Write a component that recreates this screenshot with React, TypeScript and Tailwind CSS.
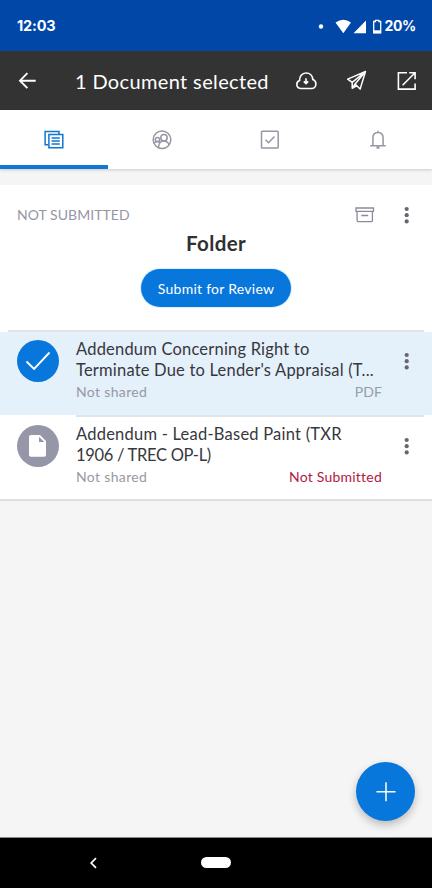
import type { ReactNode } from "react";
import clsx from "clsx";

type Doc = {
  id: number;
  lines: [string, string];
  tracking: [string, string];
  status: string;
  statusClass: string;
  selected: boolean;
};

const DOCS: Doc[] = [
  {
    id: 1,
    lines: ["Addendum Concerning Right to", "Terminate Due to Lender's Appraisal (T..."],
    tracking: ["tracking-[0.2px]", "tracking-[0.2px]"],
    status: "PDF",
    statusClass: "text-[#959dac] tracking-[0.1px]",
    selected: true,
  },
  {
    id: 2,
    lines: ["Addendum - Lead-Based Paint (TXR", "1906 / TREC OP-L)"],
    tracking: ["tracking-[0.23px]", "tracking-[-0.3px]"],
    status: "Not Submitted",
    statusClass: "text-[#b3193f] tracking-[0.22px]",
    selected: false,
  },
];

function Icon({ children, className, width = 1.5 }: { children: ReactNode; className?: string; width?: number }) {
  return (
    <svg
      width="24"
      height="24"
      viewBox="0 0 24 24"
      fill="none"
      stroke="currentColor"
      strokeWidth={width}
      className={clsx("shrink-0", className)}
    >
      {children}
    </svg>
  );
}

function MoreDots() {
  return (
    <svg width="24" height="24" viewBox="0 0 24 24" className="shrink-0 fill-[#666670]">
      <circle cx="11.7" cy="6" r="2.1" />
      <circle cx="11.7" cy="12.2" r="2.1" />
      <circle cx="11.7" cy="18.4" r="2.1" />
    </svg>
  );
}

function StatusBar() {
  return (
    <div className="flex h-[51px] items-center justify-between bg-[#0047a8] pr-[17px] pl-[17px] font-['Inter',sans-serif] text-[15px] font-bold text-white">
      <span className="text-[14.5px] tracking-[-0.2px]">12:03</span>
      <div className="flex items-center">
        <svg width="66" height="18" viewBox="0 0 66 18" fill="#fff">
          <circle cx="5" cy="9.5" r="2.2" />
          <path d="M19.5 5.5Q27.3 0.2 35 5.5L27.3 16.2Z" />
          <path d="M50 3.5V16.2H37.5Z" />
          <path d="M57.7 4.500V15.800H64.700V4.500H62.900V3.300H59.500V4.500Z" fill="none" stroke="#fff" strokeWidth="1.3" />
          <path d="M57.500 13.300H65V16.200H57.500Z" />
        </svg>
        <span className="-mr-px ml-[3px] text-[14px] tracking-[-0.35px]">20%</span>
      </div>
    </div>
  );
}

function Toolbar() {
  return (
    <div className="flex h-[59px] items-center bg-[#333] pr-[13px] pl-[16px] text-white">
      <Icon width={1.9}>
        <path d="M19.7 11.7H4.2M11.4 4.2 4 11.7l7.4 7.5" />
      </Icon>
      <h1 className="ml-[35px] flex-1 text-[20px] whitespace-nowrap tracking-[0.36px]">1 Document selected</h1>
      <div className="flex items-center gap-[26px]">
        <Icon width={1.6}>
          <path d="M6 19.500C3.500 19.500 1.800 17.700 1.800 15.400c0-1.900 1.100-3.300 2.800-3.900C4.300 7.600 7 4 11 4s6.600 2.900 6.800 6.600c1.900.600 3.100 2.300 3.100 4.500 0 2.500-1.800 4.400-4.200 4.400Z" />
          <path d="M11 9.200v5.300M8.800 12.400l2.200 2.200 2.200-2.200" />
        </Icon>
        <Icon width={1.5}>
          <path
            d="M20.500 2.500 2.700 10.100l4.500 3.200L20.500 2.500 10.100 14.900l5 5.200ZM7.200 13.300V19.300L10.100 14.900M7.200 19.300l4.700-2.600"
            strokeLinejoin="round"
          />
        </Icon>
        <Icon width={1.6}>
          <path d="M12 3.700H3.400V20.100H20.100V14.600M14.200 3.700H20.100V10.300M19.800 4 7.600 16.200" />
        </Icon>
      </div>
    </div>
  );
}

function Tabs() {
  const tab = "flex h-[59px] items-center justify-center";
  return (
    <nav className="relative z-10 grid h-[59px] grid-cols-4 bg-white text-[#9696a5] shadow-[0_1px_3px_rgba(0,0,0,0.18)]">
      <div className={clsx(tab, "border-b-4 border-[#1177d1] pt-[4px] text-[#1177d1]")}>
        <Icon>
          <path d="M6.200 16.700H3.100V3.600H17V6.300" />
          <path d="M6.900 6.500H20.800V19.800H6.900Z" />
          <path d="M9.600 10.100H17.800M9.600 13.100H17.800M9.600 16.100H17.800" />
        </Icon>
      </div>
      <div className={tab}>
        <Icon>
          <circle cx="12" cy="11.8" r="8.8" />
          <circle cx="14" cy="9.7" r="3.2" />
          <circle cx="7.5" cy="11.6" r="2.2" />
          <path d="M8.500 19.800c.2-4.200 2.200-6.700 5.200-6.700 2.700 0 4.700 1.400 5.600 4.200M3.900 15.700c.8-1.600 2-2.200 3.500-2.200 1 0 1.800.3 2.500 1" />
        </Icon>
      </div>
      <div className={tab}>
        <Icon>
          <rect x="3.5" y="3.3" width="16.7" height="16.7" rx="0.8" />
          <path d="m7.500 11.700 3 3 6-6.300" />
        </Icon>
      </div>
      <div className={tab}>
        <Icon>
          <path d="M4.200 17.700h15.600M6.900 17.500V10C6.900 6.600 9 4.500 12 4.500s5.100 2.100 5.100 5.500v7.500M12 2.700v1.800" />
          <path d="M11.300 18.300v1.700h1.400v-1.700" />
        </Icon>
      </div>
    </nav>
  );
}

function FolderHeader() {
  return (
    <section className="mt-4 flex h-[147px] flex-col bg-white px-2">
      <div className="flex h-[46px] items-start pt-[18px] pr-[5px] pl-[9px]">
        <span className="flex-1 text-[14px] leading-6 tracking-[0.05px] text-[#9696a5]">NOT SUBMITTED</span>
        <Icon className="mr-[18px] text-[#8b8b9b]" width={1.3}>
          <path d="M3 5H20.500V8.300H3ZM4.100 8.300V17.400Q4.100 18.600 5.300 18.600H18.200Q19.400 18.600 19.400 17.400V8.300M8.300 12.500H15.200" />
        </Icon>
        <MoreDots />
      </div>
      <h2 className="text-center text-[20.5px] leading-6 font-bold tracking-[0.4px] text-[#303033]">Folder</h2>
      <button className="mx-auto mt-[14px] h-[38px] w-[150px] rounded-full bg-[#0877dc] text-[14px] tracking-[0.26px] whitespace-nowrap text-white shadow-[0_0_1px_1px_#dceefb]">
        Submit for Review
      </button>
      <div className="mt-auto h-[2px] bg-[#dfe4e9]" />
    </section>
  );
}

function DocRow({ doc }: { doc: Doc }) {
  return (
    <li className={clsx("flex pr-[13px] pl-[17px]", doc.selected ? "h-[83px] bg-[#e4f0fa]" : "h-[82px] bg-white")}>
      <div
        className={clsx(
          "mt-[8px] flex size-[42px] shrink-0 items-center justify-center rounded-full",
          doc.selected ? "bg-[#0877dc]" : "bg-[#9696a9]",
        )}
      >
        {doc.selected ? (
          <svg width="26" height="22" viewBox="0 0 26 22" fill="none" stroke="#fff" strokeWidth="1.9">
            <path d="m1.500 11.500 7.600 7.500L24.500 2.500" />
          </svg>
        ) : (
          <svg width="18" height="22" viewBox="0 0 18 22" className="fill-white">
            <path
              fillRule="evenodd"
              d="M1.800 0H11L17 6V20a1.800 1.800 0 0 1-1.800 1.800H1.800a1.800 1.800 0 0 1-1.800-1.800V1.800A1.800 1.800 0 0 1 1.800 0ZM10 1.800V7H15.300Z"
            />
          </svg>
        )}
      </div>
      <div className="ml-[17px] flex w-[306px] flex-col pt-[7px]">
        <p className="text-[16.5px] leading-[21px] whitespace-nowrap text-[#37383d]">
          <span className={clsx("block", doc.tracking[0])}>{doc.lines[0]}</span>
          <span className={clsx("block", doc.tracking[1])}>{doc.lines[1]}</span>
        </p>
        <div className="flex justify-between text-[14px] leading-[22px]">
          <span className="tracking-[0.35px] text-[#9898a6]">Not shared</span>
          <span className={doc.statusClass}>{doc.status}</span>
        </div>
      </div>
      <div className="mt-[17px] ml-auto">
        <MoreDots />
      </div>
    </li>
  );
}

export default function App() {
  return (
    <div className="relative flex h-[888px] w-[432px] flex-col overflow-hidden bg-[#f5f5f5] font-['Lato',sans-serif]">
      <StatusBar />
      <Toolbar />
      <Tabs />
      <FolderHeader />
      <ul className="border-b-2 border-[#dfdfe1] bg-white">
        <DocRow doc={DOCS[0]} />
        <li className="mr-2 ml-[76px] h-[2px] bg-[#e1e5e9]" />
        <DocRow doc={DOCS[1]} />
      </ul>

      {/* Floating add button */}
      <button className="absolute right-[17px] bottom-[67px] flex size-[59px] items-center justify-center rounded-full bg-[#0877dc] shadow-[0_4px_8px_rgba(0,0,0,0.24)]">
        <svg width="20" height="20" viewBox="0 0 20 20" stroke="#fff" strokeWidth="1.5">
          <path d="M10 .3V19.3M.5 9.7H19.5" />
        </svg>
      </button>

      {/* System navigation */}
      <footer className="mt-auto grid h-[51px] grid-cols-[1fr_30px_1fr] items-center border-t border-[#8a8a8a] bg-black pb-px">
        <svg width="8" height="12" viewBox="0 0 8 12" fill="none" stroke="#fff" strokeWidth="1.7" className="ml-[90px]">
          <path d="M6 1.200 1.200 6l4.800 4.800" />
        </svg>
        <div className="h-[11px] w-[30px] rounded-full bg-white" />
      </footer>
    </div>
  );
}
